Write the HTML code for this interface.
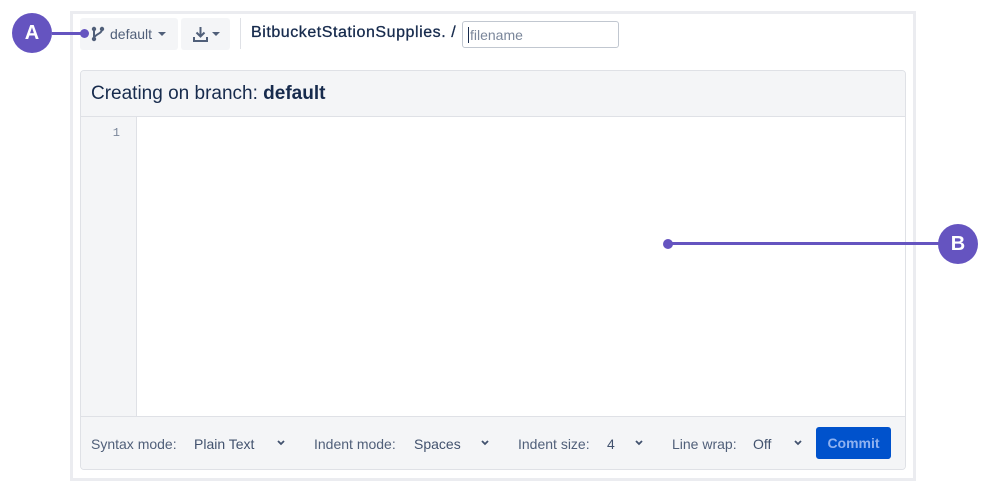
<!DOCTYPE html>
<html><head><style>
*{box-sizing:border-box;margin:0;padding:0}
body{width:992px;height:495px;background:#fff;position:relative;font-family:"Liberation Sans",sans-serif;overflow:hidden}
.frame{position:absolute;left:70px;top:11px;width:846px;height:470px;border:3px solid #ebecf0;background:#fff}
.btn{position:absolute;top:18px;height:32px;background:#f4f5f7;border-radius:3px;color:#505f79;font-size:14px;display:flex;align-items:center}
.panel{position:absolute;left:80px;top:70px;width:826px;height:400px;border:1px solid #dfe1e6;border-radius:4px;background:#fff;overflow:hidden}
.hdr{height:46px;background:#f4f5f7;border-bottom:1px solid #dfe1e6;font-size:19px;color:#172b4d;padding:12px 10px}
.gut{position:absolute;left:0;top:46px;width:56px;height:300px;background:#f4f5f7;border-right:1px solid #dfe1e6;color:#7a869a;font-family:"Liberation Mono",monospace;font-size:12px;text-align:right;padding:9px 16px}
.ftr{position:absolute;left:0;top:345px;width:826px;height:54px;background:#f4f5f7;border-top:1px solid #dfe1e6;font-size:14px;color:#505f79}
.ftr span{position:absolute;top:19px}
.v{color:#42526e}
.ftr svg{position:absolute;top:23px}
.circ{position:absolute;width:40px;height:40px;border-radius:50%;background:#6554c0;color:#fff;font-weight:bold;font-size:20px;text-align:center;line-height:40px}
</style></head><body>
<div class="frame"></div>
<div class="btn" style="left:80px;width:98px;padding-left:11px">
<svg width="14" height="16" viewBox="0 0 14 16"><circle cx="3" cy="3" r="2.2" fill="#505f79"/><circle cx="3" cy="13" r="2.2" fill="#505f79"/><circle cx="11" cy="3" r="2.2" fill="#505f79"/><path d="M3 3V13M11 3C11 8 4 8 3 12" stroke="#505f79" stroke-width="2" fill="none"/></svg>
<span style="margin-left:5px">default</span><svg style="margin-left:6px" width="8" height="5" viewBox="0 0 8 5"><path d="M0 0H8L4 4Z" fill="#505f79"/></svg></div>
<div class="btn" style="left:181px;width:49px;padding-left:11px">
<svg width="17" height="17" viewBox="0 0 17 17"><path d="M8.5 1V10M4.5 6.5L8.5 10.5L12.5 6.5M2 11V15H15V11" stroke="#505f79" stroke-width="2" fill="none"/></svg><svg style="margin-left:3px" width="8" height="5" viewBox="0 0 8 5"><path d="M0 0H8L4 4Z" fill="#505f79"/></svg></div>
<div style="position:absolute;left:240px;top:18px;width:1px;height:31px;background:#dfe1e6"></div>
<div style="position:absolute;left:251px;top:24px;font-size:16px;letter-spacing:0.55px;color:#172b4d;-webkit-text-stroke:0.3px #172b4d">BitbucketStationSupplies. /</div>
<div style="position:absolute;left:462px;top:21px;width:157px;height:27px;border:1px solid #c1c7d0;border-radius:3px;font-size:14px;color:#7a869a;padding:5px 5px"><span style="border-left:1px solid #172b4d;padding-left:1px">filename</span></div>
<div class="panel">
<div class="hdr">Creating on branch: <b>default</b></div>
<div class="gut">1</div>
<div class="ftr">
<span style="left:10px">Syntax mode:</span><span class="v" style="left:113px">Plain Text</span><svg style="left:196px" width="8" height="6" viewBox="0 0 8 6"><path d="M1 1L4 4L7 1" stroke="#42526e" stroke-width="1.8" fill="none"/></svg>
<span style="left:233px">Indent mode:</span><span class="v" style="left:333px">Spaces</span><svg style="left:400px" width="8" height="6" viewBox="0 0 8 6"><path d="M1 1L4 4L7 1" stroke="#42526e" stroke-width="1.8" fill="none"/></svg>
<span style="left:437px">Indent size:</span><span class="v" style="left:526px">4</span><svg style="left:554px" width="8" height="6" viewBox="0 0 8 6"><path d="M1 1L4 4L7 1" stroke="#42526e" stroke-width="1.8" fill="none"/></svg>
<span style="left:591px">Line wrap:</span><span class="v" style="left:672px">Off</span><svg style="left:713px" width="8" height="6" viewBox="0 0 8 6"><path d="M1 1L4 4L7 1" stroke="#42526e" stroke-width="1.8" fill="none"/></svg>
<div style="position:absolute;left:735px;top:10px;width:75px;height:32px;background:#0052cc;border-radius:3px;color:#8fb2f0;font-weight:bold;font-size:14px;text-align:center;line-height:32px">Commit</div>
</div>
</div>
<div class="circ" style="left:12px;top:13px">A</div>
<div style="position:absolute;left:52px;top:32px;width:30px;height:3px;background:#6554c0"></div>
<div style="position:absolute;left:80px;top:29px;width:9px;height:9px;border-radius:50%;background:#6554c0"></div>
<div class="circ" style="left:938px;top:224px">B</div>
<div style="position:absolute;left:668px;top:242px;width:272px;height:3px;background:#6554c0"></div>
<div style="position:absolute;left:663px;top:239px;width:10px;height:10px;border-radius:50%;background:#6554c0"></div>
</body></html>
